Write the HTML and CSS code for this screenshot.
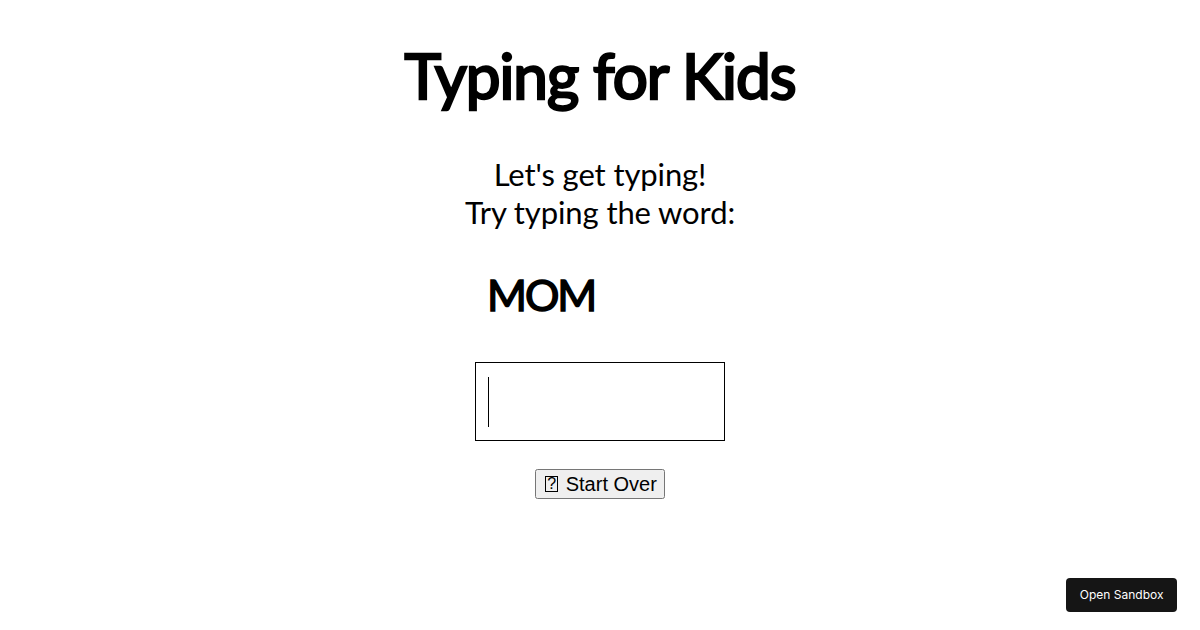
FILE: index.html
```html
<!DOCTYPE html>
<html lang="en">
<head>
<meta charset="UTF-8" />
<meta name="viewport" content="width=device-width, initial-scale=1.0"/>
<title>Typing for Kids</title>
<link rel="stylesheet" href="styles.css">
</head>
<body>

<div class="app">
  <h1>Typing for Kids</h1>
  <p class="intro">Let's get typing!<br>Try typing the word:</p>
  <div class="word">MOM</div>
  <div class="answer"><span class="caret"></span></div>
  <button class="restart"><span class="tofu">?</span> Start Over</button>
</div>

<a class="sandbox" href="#">Open Sandbox</a>

</body>
</html>
```

FILE: styles.css
```css
body {
  margin: 0;
  height: 630px;
  overflow: hidden;
  background: #fff;
  color: #000;
  font-family: Lato, sans-serif;
}
.app {
  display: flex;
  flex-direction: column;
  align-items: center;
}
h1 {
  margin: 34px 0 0;
  font-size: 62px;
  line-height: 82px;
  font-weight: 400;
  letter-spacing: -1px;
  -webkit-text-stroke: 2.5px #000;
}
.intro {
  margin: 39px 0 0;
  font-size: 31px;
  line-height: 38px;
  letter-spacing: -0.1px;
  text-align: center;
}
.word {
  width: 250px;
  box-sizing: border-box;
  margin-top: 35px;
  padding-left: 12px;
  font-size: 43px;
  line-height: 58px;
  font-weight: 400;
  letter-spacing: -2px;
  -webkit-text-stroke: 1.5px #000;
}
.answer {
  box-sizing: border-box;
  width: 250px;
  height: 79px;
  margin-top: 38px;
  padding: 14px 12px;
  border: 1px solid #000;
}
.caret {
  display: block;
  width: 1px;
  height: 50px;
  background: #000;
}
.restart {
  margin-top: 28px;
  height: 30px;
  padding: 1px 6px;
  font-family: "Liberation Sans", sans-serif;
  font-size: 20px;
}
.tofu {
  display: inline-block;
  box-sizing: border-box;
  width: 13px;
  height: 16px;
  margin: 0 2px;
  border: 1px solid #000;
  font-size: 16px;
  line-height: 14px;
  text-align: center;
  vertical-align: 2px;
}
.sandbox {
  position: absolute;
  right: 23px;
  bottom: 18px;
  padding: 0 13.5px;
  line-height: 34px;
  border-radius: 4px;
  background: #151515;
  color: #fff;
  font-family: Inter, sans-serif;
  font-size: 12px;
  text-decoration: none;
}
```
